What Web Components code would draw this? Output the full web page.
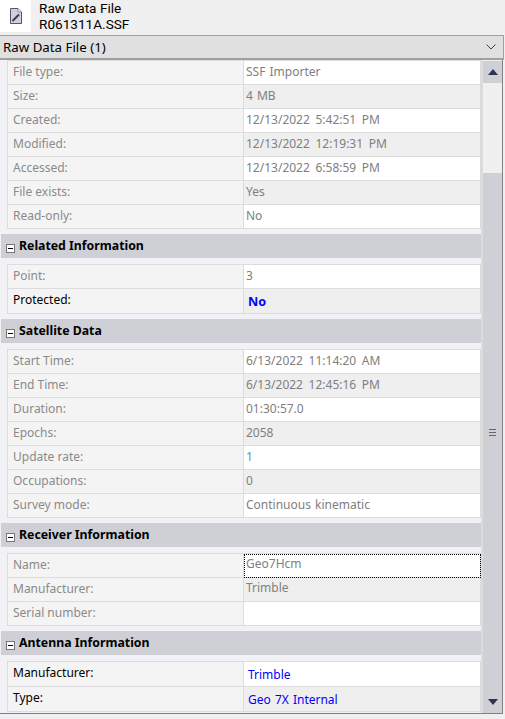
<!DOCTYPE html>
<html>
<head>
<meta charset="utf-8">
<title>Raw Data File</title>
<style>
  html, body { margin: 0; padding: 0; background: #f0f0f0; }
  body { width: 505px; height: 719px; overflow: hidden; font-family: "Noto Sans", sans-serif; }
</style>
</head>
<body>
<file-app>
  <file-head slot="head" kind="Raw Data File" name="R061311A.SSF"></file-head>
  <group-bar slot="bar" label="Raw Data File (1)"></group-bar>

  <prop-section>
    <prop-row label="File type:" value="SSF Importer"></prop-row>
    <prop-row label="Size:" value="4 MB" alt></prop-row>
    <prop-row label="Created:" value="12/13/2022 5:42:51 PM" date></prop-row>
    <prop-row label="Modified:" value="12/13/2022 12:19:31 PM" alt date></prop-row>
    <prop-row label="Accessed:" value="12/13/2022 6:58:59 PM" date></prop-row>
    <prop-row label="File exists:" value="Yes" alt></prop-row>
    <prop-row label="Read-only:" value="No"></prop-row>
  </prop-section>

  <prop-section title="Related Information">
    <prop-row label="Point:" value="3"></prop-row>
    <prop-row label="Protected:" value="No" alt active bold tall></prop-row>
  </prop-section>

  <prop-section title="Satellite Data">
    <prop-row label="Start Time:" value="6/13/2022 11:14:20 AM" date></prop-row>
    <prop-row label="End Time:" value="6/13/2022 12:45:16 PM" alt date></prop-row>
    <prop-row label="Duration:" value="01:30:57.0"></prop-row>
    <prop-row label="Epochs:" value="2058" alt></prop-row>
    <prop-row label="Update rate:" value="1" tint></prop-row>
    <prop-row label="Occupations:" value="0" alt></prop-row>
    <prop-row label="Survey mode:" value="Continuous kinematic"></prop-row>
  </prop-section>

  <prop-section title="Receiver Information">
    <prop-row label="Name:" value="Geo7Hcm" focused raise></prop-row>
    <prop-row label="Manufacturer:" value="Trimble" alt raise></prop-row>
    <prop-row label="Serial number:" value=""></prop-row>
  </prop-section>

  <prop-section title="Antenna Information">
    <prop-row label="Manufacturer:" value="Trimble" active tall></prop-row>
    <prop-row label="Type:" value="Geo 7X Internal" alt active tall></prop-row>
  </prop-section>

  <v-scroll slot="scroll"></v-scroll>
</file-app>

<script>
class FileApp extends HTMLElement {
  connectedCallback() {
    const shadow = this.attachShadow({ mode: "open" });
    shadow.innerHTML = `
      <style>
        :host { display: flex; flex-direction: column; width: 505px; height: 719px; color: #000; }
        .pane {
          display: flex;
          height: 654px;
          width: 503px;
          box-sizing: border-box;
          border-right: 1px solid #808080;
          border-bottom: 1px solid #808080;
          overflow: hidden;
        }
        .list { display: block; width: 481px; background: #f1f1f6; overflow: hidden; }
      </style>
      <slot name="head"></slot>
      <slot name="bar"></slot>
      <div class="pane">
        <div class="list"><slot></slot></div>
        <slot name="scroll"></slot>
      </div>
    `;
  }
}

class FileHead extends HTMLElement {
  connectedCallback() {
    const shadow = this.attachShadow({ mode: "open" });
    shadow.innerHTML = `
      <style>
        :host {
          display: flex;
          height: 35px;
          background: #f0f0f0;
          font: 13.6px/16px Roboto, sans-serif;
          color: #000;
        }
        .icon {
          width: 31px;
          height: 32px;
          background: #fff;
          display: flex;
          align-items: center;
          justify-content: center;
        }
        .names { margin-left: 8px; }
        .names div { white-space: nowrap; }
      </style>
      <div class="icon">
        <svg width="12" height="16" viewBox="0 0 12 16">
          <path d="M.5.5H8L11.5 4V15.5H.5Z" fill="#d0d0da" stroke="#55556a"/>
          <path d="M8 .5V4h3.5" fill="#f4f4f8" stroke="#8a8a98"/>
          <path d="M2.5 13L9 6.5" stroke="#3a3a4c" stroke-width="2" fill="none"/>
        </svg>
      </div>
      <div class="names">
        <div>${this.getAttribute("kind")}</div>
        <div>${this.getAttribute("name")}</div>
      </div>
    `;
  }
}

class GroupBar extends HTMLElement {
  connectedCallback() {
    const shadow = this.attachShadow({ mode: "open" });
    shadow.innerHTML = `
      <style>
        :host {
          display: flex;
          align-items: center;
          justify-content: space-between;
          box-sizing: border-box;
          width: 504px;
          height: 25px;
          padding: 0 7px 0 3px;
          background: #e0e0e0;
          border-top: 1px solid #a0a0a0;
          border-right: 1px solid #a0a0a0;
          border-bottom: 2px solid #a0a0a0;
          font: 13.3px "Noto Sans", sans-serif;
          color: #000;
        }
      </style>
      <span>${this.getAttribute("label")}</span>
      <svg width="10" height="6" viewBox="0 0 10 6"><path d="M.5.5L5 5 9.5.5" fill="none" stroke="#444"/></svg>
    `;
  }
}

class PropSection extends HTMLElement {
  connectedCallback() {
    const shadow = this.attachShadow({ mode: "open" });
    const title = this.getAttribute("title");
    shadow.innerHTML = `
      <style>
        :host { display: block; padding-bottom: 5px; }
        .band {
          display: flex;
          align-items: center;
          height: 24px;
          margin-bottom: 6px;
          margin-left: 1px;
          background: #cfd0d5;
          font: bold 12.3px "Noto Sans", sans-serif;
          color: #000;
        }
        .label { padding-bottom: 2px; }
        .box {
          box-sizing: border-box;
          width: 9px;
          height: 9px;
          margin: 4px 4px 0 5px;
          background: #fff;
          border: 1px solid #777;
          display: flex;
          align-items: center;
          justify-content: center;
        }
        .box i { display: block; width: 5px; height: 1px; background: #000; }
        .rows {
          margin-left: 7px;
          border: solid #dcdcdc;
          border-width: 1px 0 0 1px;
          background: #f4f4f4;
        }
      </style>
      ${title ? `<div class="band"><span class="box"><i></i></span><span class="label">${title}</span></div>` : ""}
      <div class="rows"><slot></slot></div>
    `;
  }
}

class PropRow extends HTMLElement {
  connectedCallback() {
    const shadow = this.attachShadow({ mode: "open" });
    shadow.innerHTML = `
      <style>
        :host {
          display: grid;
          grid-template-columns: 236px 1fr;
          height: 24px;
          font: 12px "Noto Sans", sans-serif;
          color: #8a8a8a;
        }
        :host([tall]) { height: 25px; }
        .label, .value {
          box-sizing: border-box;
          display: flex;
          align-items: center;
          padding-bottom: 2px;
          border-bottom: 1px solid #dcdcdc;
          white-space: pre;
          overflow: hidden;
        }
        .label { padding-left: 5px; border-right: 1px solid #dcdcdc; background: #f4f4f4; }
        .value { padding-left: 2px; background: #fff; border-right: 1px solid #dcdcdc; color: #808080; word-spacing: 1px; }
        :host([alt]) .value { background: #efefef; }
        :host([date]) .value { word-spacing: 2.5px; }
        :host([raise]) .value { padding-bottom: 4px; }
        :host([active]) .label { color: #000; align-items: flex-start; padding-top: 2px; padding-bottom: 0; }
        :host([active]) .value { color: #0000ff; padding-left: 4px; padding-bottom: 0; }
        :host([bold]) .value { font-weight: bold; font-size: 12.6px; }
        :host([tint]) .value { color: #6a8cb8; }
        :host([focused]) .value { outline: 1px dotted #000; outline-offset: -1px; }
      </style>
      <div class="label">${this.getAttribute("label")}</div>
      <div class="value">${this.getAttribute("value")}</div>
    `;
  }
}

class VScroll extends HTMLElement {
  connectedCallback() {
    const shadow = this.attachShadow({ mode: "open" });
    shadow.innerHTML = `
      <style>
        :host {
          display: flex;
          flex-direction: column;
          flex: 1;
          box-sizing: border-box;
          padding-left: 2px;
          background: #f0f0f0;
          box-shadow: inset 2px 0 0 #dcdcdc;
        }
        .btn {
          height: 22px;
          flex: none;
          display: flex;
          align-items: center;
          justify-content: center;
          background: #cfd0d5;
        }
        .up { margin-top: 1px; }
        .track { height: 90px; flex: none; background: #f0f0f0; }
        .thumb {
          flex: 1;
          display: flex;
          align-items: center;
          justify-content: center;
          background: #cfd0d5;
        }
        .grip { width: 7px; height: 7px; background: repeating-linear-gradient(#666 0 1px, transparent 1px 3px); }
      </style>
      <div class="btn up"><svg width="10" height="6" viewBox="0 0 10 6"><path d="M5 0L10 6H0Z" fill="#2d3350"/></svg></div>
      <div class="track"></div>
      <div class="thumb"><div class="grip"></div></div>
      <div class="btn down"><svg width="10" height="6" viewBox="0 0 10 6"><path d="M5 6L0 0H10Z" fill="#2d3350"/></svg></div>
    `;
  }
}

customElements.define("file-app", FileApp);
customElements.define("file-head", FileHead);
customElements.define("group-bar", GroupBar);
customElements.define("prop-section", PropSection);
customElements.define("prop-row", PropRow);
customElements.define("v-scroll", VScroll);
</script>
</body>
</html>
